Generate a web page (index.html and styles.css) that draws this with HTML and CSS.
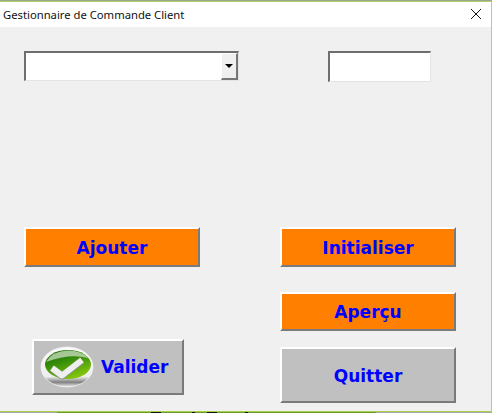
FILE: index.html
```html
<!DOCTYPE html>
<html lang="fr">
	<head>
		<meta charset="UTF-8" />
		<meta name="viewport" content="width=device-width, initial-scale=1.0" />
		<title>Gestionnaire de Commande Client</title>
		<link rel="stylesheet" href="styles.css">
	</head>
	<body>
		<div class="window">
			<div class="titlebar">
				<span class="title">Gestionnaire de Commande Client</span>
				<svg class="close" width="12" height="12" viewBox="0 0 12 12">
					<path d="M1 1 L11 11 M11 1 L1 11" stroke="#111" stroke-width="1" fill="none" />
				</svg>
			</div>
			<div class="form">
				<div class="row top-row">
					<div class="combo">
						<div class="combo-text"></div>
						<div class="combo-btn"><span class="arrow"></span></div>
					</div>
					<div class="textbox"></div>
				</div>
				<div class="row add-row">
					<button class="btn orange wide">Ajouter</button>
					<button class="btn orange wide">Initialiser</button>
				</div>
				<div class="row bottom-row">
					<button class="btn grey valider">
						<svg class="check" width="58" height="42" viewBox="0 0 58 42">
							<defs>
								<linearGradient id="ring" x1="0" y1="0" x2="0" y2="1">
									<stop offset="0" stop-color="#fafafa" />
									<stop offset="0.74" stop-color="#eeeeee" />
									<stop offset="0.88" stop-color="#808080" />
									<stop offset="1" stop-color="#f0f0f0" />
								</linearGradient>
								<linearGradient id="dome" x1="0.2" y1="0" x2="0.7" y2="1">
									<stop offset="0" stop-color="#1f6a0a" />
									<stop offset="0.38" stop-color="#348c08" />
									<stop offset="1" stop-color="#8ccc0e" />
								</linearGradient>
							</defs>
							<ellipse cx="27" cy="21" rx="26" ry="20" fill="url(#ring)" stroke="#f4f4f4" stroke-width="0.75" />
							<ellipse cx="28" cy="18.5" rx="23" ry="14.5" fill="url(#dome)" />
							<path d="M6 16 Q12 5 28 4.5 Q42 4.5 48 12 Q30 7 6 16 Z" fill="#cfe0c4" opacity="0.75" />
							<path d="M12 22.5 L22 30 L42 14.5" fill="none" stroke="#8a9a80" stroke-width="7" stroke-linejoin="round" />
							<path d="M12 22 L22 29.5 L42 14" fill="none" stroke="#efefef" stroke-width="6" stroke-linejoin="round" />
						</svg>
						<span>Valider</span>
					</button>
					<div class="col">
						<button class="btn orange apercu">Aperçu</button>
						<button class="btn grey quitter">Quitter</button>
					</div>
				</div>
			</div>
			<div class="bottom-edge"></div>
			<div class="taskbar-line">
				<span class="seg-grey"></span>
				<span class="seg-green one"></span>
				<span class="seg-black wide-bit"></span>
				<span class="seg-green two"></span>
				<span class="seg-black thin-bit"></span>
				<span class="seg-green three"></span>
				<span class="seg-black wide-bit"></span>
				<span class="seg-green four"></span>
				<span class="seg-black thin-bit"></span>
				<span class="seg-green five"></span>
				<span class="seg-grey grow"></span>
			</div>
		</div>
	</body>
</html>
```

FILE: styles.css
```css
html,
body {
	margin: 0;
	padding: 0;
	height: 100%;
	overflow: hidden;
}

body {
	background-color: #f0f0f0;
	font-family: "Liberation Sans", Arial, sans-serif;
}

.window {
	width: 492px;
	height: 413px;
	box-sizing: border-box;
	display: flex;
	flex-direction: column;
	border-top: 1px solid #9aa88a;
	background-color: #f0f0f0;
}

.titlebar {
	height: 26px;
	box-sizing: border-box;
	border-top: 1px solid #b4d070;
	border-right: 1px solid #b4d070;
	background-color: #fff;
	display: flex;
	align-items: center;
	justify-content: space-between;
	padding: 0 4px 1px 3px;
	flex-shrink: 0;
}

.title {
	font-family: "Noto Sans", "Open Sans", sans-serif;
	font-size: 11.25px;
	color: #111;
}

.close {
	margin-right: 5px;
}

.form {
	flex: 1;
	padding: 24px 35px 0 24px;
	display: flex;
	flex-direction: column;
	border-right: 1px solid #b4d070;
}

.row {
	display: flex;
	justify-content: space-between;
}

.combo {
	width: 215px;
	height: 30px;
	box-sizing: border-box;
	display: flex;
	background-color: #fff;
	border-top: 2px solid #6e6e6e;
	border-left: 2px solid #6e6e6e;
	border-right: 1px solid #e4e4e4;
	border-bottom: 1px solid #e4e4e4;
}

.combo-text {
	flex: 1;
}

.combo-btn {
	width: 17px;
	box-sizing: border-box;
	background-color: #f0f0f0;
	border-top: 1px solid #fff;
	border-left: 1px solid #fff;
	border-right: 2px solid #777;
	border-bottom: 2px solid #777;
	display: flex;
	align-items: center;
	justify-content: center;
}

.arrow {
	width: 0;
	height: 0;
	border-left: 4px solid transparent;
	border-right: 4px solid transparent;
	border-top: 4px solid #000;
}

.textbox {
	width: 103px;
	height: 31px;
	margin-right: 25px;
	box-sizing: border-box;
	background-color: #fff;
	border-top: 2px solid #6e6e6e;
	border-left: 2px solid #6e6e6e;
	border-right: 1px solid #e4e4e4;
	border-bottom: 1px solid #e4e4e4;
}

.add-row {
	margin-top: 145px;
}

.btn {
	box-sizing: border-box;
	padding: 0;
	border-top: 2px solid #fff;
	border-left: 2px solid #fff;
	border-right: 2px solid #7a7a7a;
	border-bottom: 2px solid #7a7a7a;
	font-family: "DejaVu Sans", Verdana, sans-serif;
	font-size: 17px;
	font-weight: bold;
	color: #0000ff;
	display: flex;
	align-items: center;
	justify-content: center;
}

.orange {
	background-color: #ff8000;
}

.grey {
	background-color: #c0c0c0;
}

.wide {
	width: 176px;
	height: 40px;
	padding-top: 1px;
}

.bottom-row {
	margin-top: 25px;
	align-items: flex-end;
}

.col {
	display: flex;
	flex-direction: column;
	gap: 16px;
}

.apercu {
	width: 176px;
	height: 39px;
}

.quitter {
	width: 176px;
	height: 56px;
	padding-top: 2px;
}

.valider {
	width: 152px;
	height: 56px;
	margin-left: 8px;
	margin-bottom: 8px;
	justify-content: flex-start;
	gap: 3px;
	padding-left: 6px;
}

.check {
	flex-shrink: 0;
}

.bottom-edge {
	height: 1px;
	background-color: #a8d048;
	flex-shrink: 0;
}

.taskbar-line {
	height: 1px;
	display: flex;
	flex-shrink: 0;
}

.seg-grey {
	width: 57px;
	background-color: #a8a8a8;
}

.seg-green {
	background-color: #6a9a2a;
}

.seg-black {
	background-color: #111;
}

.wide-bit {
	width: 10px;
}

.thin-bit {
	width: 3px;
}

.one {
	width: 94px;
}

.two {
	width: 31px;
}

.three {
	width: 12px;
}

.four {
	width: 28px;
}

.five {
	width: 128px;
}

.grow {
	flex: 1;
}
```
